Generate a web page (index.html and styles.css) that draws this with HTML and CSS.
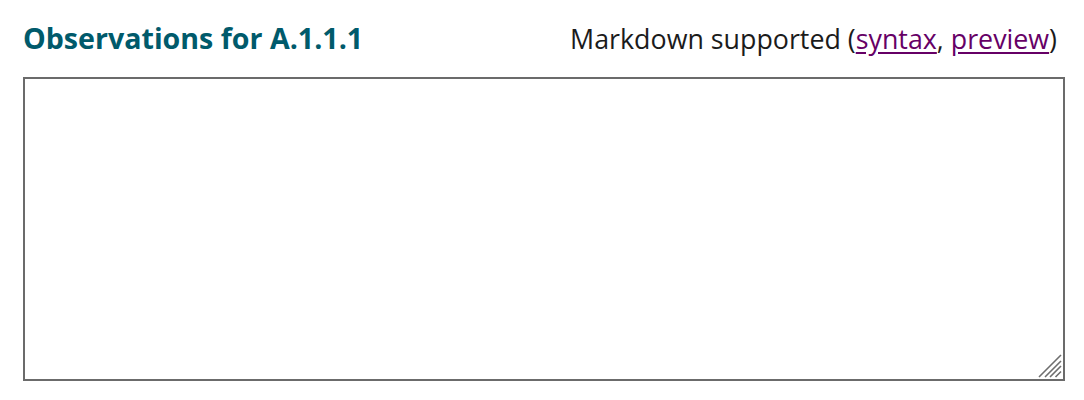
FILE: index.html
```html
<!DOCTYPE html>
<html>
<head>
<meta charset="utf-8">
<link rel="stylesheet" href="styles.css">
</head>
<body>
<div class="field">
  <div class="field-head">
    <label class="field-label" for="obs">Observations for A.1.1.1</label>
    <span class="field-hint">Markdown supported (<a href="#">syntax</a>, <a href="#">preview</a>)</span>
  </div>
  <div class="field-box">
    <textarea id="obs" class="field-input"></textarea>
    <svg class="grip" width="24" height="24" viewBox="0 0 24 24" aria-hidden="true">
      <path d="M1 23 L23 1 M7 23 L23 7 M12 23 L23 12 M17.5 23 L23 17.5" stroke="#6e6e6e" stroke-width="1.6" fill="none"/>
    </svg>
  </div>
</div>
</body>
</html>
```
FILE: styles.css
```css
html, body {
  margin: 0;
  padding: 0;
  background: #ffffff;
}
body {
  font-family: "Open Sans", "Noto Sans", sans-serif;
  color: #1b1b1b;
}
.field {
  width: 1042px;
  margin-left: 23px;
  padding-top: 18px;
}
.field-head {
  display: flex;
  justify-content: space-between;
  align-items: baseline;
  padding-right: 8px;
  margin-bottom: 18px;
}
.field-label {
  font-weight: 700;
  font-size: 28.6px;
  color: #005a6b;
  line-height: 40px;
}
.field-hint {
  font-size: 26.8px;
  line-height: 40px;
}
.field-hint a {
  color: #660066;
  text-decoration: underline;
  text-underline-offset: 3px;
}
.field-box {
  position: relative;
  width: 1042px;
  height: 304px;
}
.field-input {
  display: block;
  box-sizing: border-box;
  width: 100%;
  height: 100%;
  margin: 0;
  border: 2px solid #6b6b6b;
  border-radius: 0;
  background: #fff;
  resize: none;
  font-family: inherit;
  font-size: 22px;
}
.grip {
  position: absolute;
  right: 3px;
  bottom: 3px;
}
```
